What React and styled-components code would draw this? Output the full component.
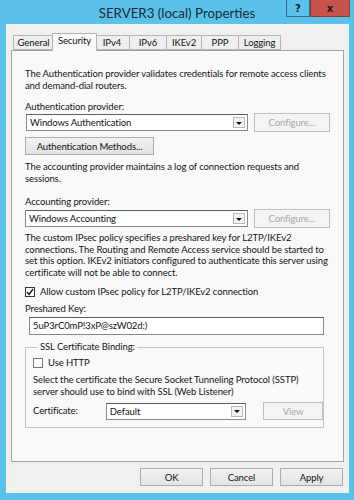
import React from 'react';
import styled, { createGlobalStyle, css } from 'styled-components';

const Global = createGlobalStyle`
  html, body { margin: 0; padding: 0; background: #5ac2ea; }
  body { width: 354px; height: 500px; overflow: hidden; font-family: Lato, "Noto Sans", sans-serif; }
  * { box-sizing: border-box; }
`;

const uiFont = css`
  font-size: 9.5px;
  letter-spacing: -0.1px;
`;

const Window = styled.div`
  width: 354px;
  height: 500px;
  background: #5ac2ea;
  display: flex;
  flex-direction: column;
`;

const TitleBar = styled.div`
  height: 24px;
  display: grid;
  grid-template-columns: 1fr auto 1fr;
  align-items: start;
`;

const Title = styled.div`
  grid-column: 2;
  font-size: 13.3px;
  line-height: 26px;
  color: #1c2a33;
  white-space: nowrap;
`;

const Caption = styled.div`
  grid-column: 3;
  justify-self: end;
  display: flex;
  padding-right: 4px;
`;

const CapButton = styled.div`
  width: ${p => p.$w}px;
  height: 17px;
  display: flex;
  align-items: center;
  justify-content: center;
  font-family: "DejaVu Sans", sans-serif;
  font-weight: bold;
  font-size: ${p => p.$fs}px;
  color: ${p => p.$fg};
  background: ${p => p.$bg};
  border: 1px solid ${p => p.$bd};
  border-top: none;
`;

const Client = styled.div`
  flex: 1;
  margin: 0 5px 7px 6px;
  background: #f0f0f0;
  display: flex;
  flex-direction: column;
  padding: 9px 5px 7px 5px;
`;

const TabRow = styled.div`
  display: flex;
  align-items: flex-end;
  height: 18px;
  padding-left: 2px;
  position: relative;
  z-index: 1;
  margin-bottom: -1px;
`;

const Tab = styled.div`
  ${uiFont};
  width: ${p => p.$w}px;
  height: ${p => (p.$active ? 18 : 15)}px;
  margin: ${p => (p.$active ? '0 -2px' : '0 0 1px 0')};
  border: 1px solid #b4b4b4;
  border-bottom: ${p => (p.$active ? 'none' : '1px solid #b4b4b4')};
  border-left: ${p => (p.$first || p.$active ? '1px solid #b4b4b4' : 'none')};
  background: ${p => (p.$active ? '#f9f9f9' : '#efefef')};
  line-height: ${p => (p.$active ? 14 : 13)}px;
  text-align: center;
  color: #111;
  position: relative;
  z-index: ${p => (p.$active ? 2 : 0)};
`;

const Panel = styled.div`
  flex: 1;
  border: 1px solid #a3a3a3;
  background: #f9f9f9;
  padding: 17px 13px 0 13px;
  display: flex;
  flex-direction: column;
`;

const Text = styled.div`
  ${uiFont};
  line-height: ${p => p.$lh || 12}px;
  color: #141414;
  margin-top: ${p => p.$mt || 0}px;
  white-space: nowrap;
`;

const Row = styled.div`
  display: flex;
  align-items: center;
  gap: ${p => p.$gap || 6}px;
  margin-top: ${p => p.$mt || 0}px;
  height: ${p => p.$h || 19}px;
`;

const Combo = styled.div`
  width: ${p => p.$w}px;
  height: 17px;
  border: 1px solid #8a8a8a;
  border-top-color: #5e5e5e;
  background: #fff;
  display: flex;
  align-items: stretch;
  margin-left: ${p => p.$ml || 0}px;
`;

const ComboValue = styled.div`
  ${uiFont};
  flex: 1;
  line-height: 15px;
  padding-left: 3px;
  color: #111;
  white-space: nowrap;
`;

const ComboArrow = styled.div`
  width: 12px;
  margin: 2px 2px 2px 0;
  border: 1px solid #b9b9b9;
  background: #f4f4f4;
  display: flex;
  align-items: center;
  justify-content: center;
  &::after {
    content: '';
    border-left: 3px solid transparent;
    border-right: 3px solid transparent;
    border-top: 3px solid #111;
    margin-top: 1px;
  }
`;

const Button = styled.div`
  ${uiFont};
  width: ${p => p.$w}px;
  height: ${p => p.$h || 19}px;
  border: 1px solid ${p => (p.$disabled ? '#bfbfbf' : '#acacac')};
  background: ${p => (p.$disabled ? '#f4f4f4' : 'linear-gradient(#f2f2f2, #e3e3e3)')};
  color: ${p => (p.$disabled ? '#a6a6a6' : '#121212')};
  display: flex;
  align-items: center;
  justify-content: center;
  margin-top: ${p => p.$mt || 0}px;
  margin-left: ${p => p.$ml || 0}px;
  white-space: nowrap;
`;

const Check = styled.div`
  width: 10px;
  height: 10px;
  border: 1px solid ${p => (p.$checked ? '#333' : '#7a7a7a')};
  background: #fff;
  display: flex;
  align-items: center;
  justify-content: center;
`;

const Input = styled.div`
  ${uiFont};
  height: 18px;
  margin-top: 2px;
  margin-right: 6px;
  margin-left: 4px;
  border: 1px solid #8a8a8a;
  border-top-color: #5e5e5e;
  background: #fff;
  line-height: 16px;
  padding-left: 3px;
  color: #111;
`;

const Group = styled.fieldset`
  margin: 6px 6px 0 0;
  padding: 4px 0 7px 7px;
  border: 1px solid #c4c4c4;
  min-width: 0;
`;

const Legend = styled.legend`
  ${uiFont};
  line-height: 12px;
  color: #141414;
  padding: 0 2px;
  margin-left: 5px;
`;

const Footer = styled.div`
  display: flex;
  justify-content: flex-end;
  gap: 7px;
  margin-top: 6px;
  padding-right: 1px;
`;

const CheckMark = () => (
  <svg width="8" height="8" viewBox="0 0 8 8">
    <path d="M1 4 L3 6.5 L7 1" fill="none" stroke="#222" strokeWidth="1.4" />
  </svg>
);

export default function App() {
  return (
    <Window>
      <Global />
      <TitleBar>
        <Title>SERVER3 (local) Properties</Title>
        <Caption>
          <CapButton $w={24} $bg="#5ac2ea" $bd="#2f6f8f" $fg="#1a1a1a" $fs={10}>?</CapButton>
          <CapButton $w={40} $bg="#c7534b" $bd="#8f3a34" $fg="#1a1a1a" $fs={10}>x</CapButton>
        </Caption>
      </TitleBar>
      <Client>
        <TabRow>
          <Tab $w={41} $first>General</Tab>
          <Tab $w={45} $active>Security</Tab>
          <Tab $w={35}>IPv4</Tab>
          <Tab $w={37}>IPv6</Tab>
          <Tab $w={35}>IKEv2</Tab>
          <Tab $w={37}>PPP</Tab>
          <Tab $w={42}>Logging</Tab>
        </TabRow>
        <Panel>
          <Text>The Authentication provider validates credentials for remote access clients</Text>
          <Text>and demand-dial routers.</Text>
          <Text $mt={9}>Authentication provider:</Text>
          <Row>
            <Combo $w={224} $ml={1}>
              <ComboValue>Windows Authentication</ComboValue>
              <ComboArrow />
            </Combo>
            <Button $w={77} $disabled>Configure...</Button>
          </Row>
          <Button $w={129} $h={18} $mt={5}>Authentication Methods...</Button>
          <Text $mt={6}>The accounting provider maintains a log of connection requests and</Text>
          <Text>sessions.</Text>
          <Text $mt={11}>Accounting provider:</Text>
          <Row $mt={1}>
            <Combo $w={224}>
              <ComboValue>Windows Accounting</ComboValue>
              <ComboArrow />
            </Combo>
            <Button $w={77} $disabled>Configure...</Button>
          </Row>
          <Text $mt={4} $lh={11.5}>The custom IPsec policy specifies a preshared key for L2TP/IKEv2</Text>
          <Text $lh={11.5}>connections. The Routing and Remote Access service should be started to</Text>
          <Text $lh={11.5}>set this option. IKEv2 initiators configured to authenticate this server using</Text>
          <Text $lh={11.5}>certificate will not be able to connect.</Text>
          <Row $mt={8} $h={12} $gap={5}>
            <Check $checked><CheckMark /></Check>
            <Text>Allow custom IPsec policy for L2TP/IKEv2 connection</Text>
          </Row>
          <Text $mt={5}>Preshared Key:</Text>
          <Input>5uP3rC0mP!3xP@szW02d:)</Input>
          <Group>
            <Legend>SSL Certificate Binding:</Legend>
            <Row $h={12} $gap={5}>
              <Check />
              <Text>Use HTTP</Text>
            </Row>
            <Text $mt={5}>Select the certificate the Secure Socket Tunneling Protocol (SSTP)</Text>
            <Text>server should use to bind with SSL (Web Listener)</Text>
            <Row $mt={4} $h={18} $gap={0}>
              <Text>Certificate:</Text>
              <Combo $w={148} $ml={22}>
                <ComboValue>Default</ComboValue>
                <ComboArrow />
              </Combo>
              <Button $w={63} $h={18} $ml={11} $disabled>View</Button>
            </Row>
          </Group>
        </Panel>
        <Footer>
          <Button $w={63} $h={18}>OK</Button>
          <Button $w={63} $h={18}>Cancel</Button>
          <Button $w={63} $h={18}>Apply</Button>
        </Footer>
      </Client>
    </Window>
  );
}
